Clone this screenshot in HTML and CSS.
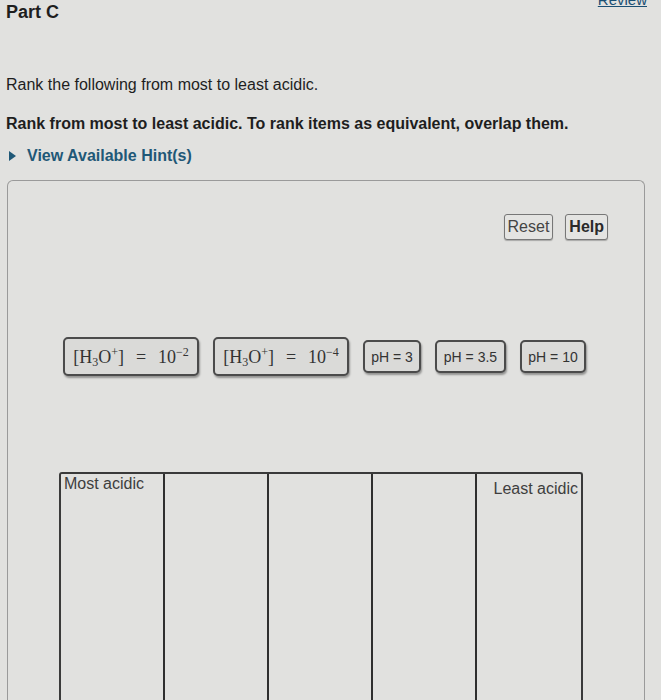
FILE: index.html
```html
<!DOCTYPE html>
<html>
<head>
<meta charset="utf-8">
<link rel="stylesheet" href="styles.css">
</head>
<body>
<div class="page">
  <div class="header">
    <div class="part">Part C</div>
    <a class="review">Review</a>
  </div>
  <p class="prompt">Rank the following from most to least acidic.</p>
  <p class="instr">Rank from most to least acidic. To rank items as equivalent, overlap them.</p>
  <div class="hint"><span class="tri"></span><span>View Available Hint(s)</span></div>
  <div class="panel">
    <div class="tools">
      <button class="btn">Reset</button>
      <button class="btn bold">Help</button>
    </div>
    <div class="items">
      <div class="item math"><span class="expr">[H<sub>3</sub>O<sup>+</sup>]<span class="eq">=</span>10<sup>&minus;2</sup></span></div>
      <div class="item math"><span class="expr">[H<sub>3</sub>O<sup>+</sup>]<span class="eq">=</span>10<sup>&minus;4</sup></span></div>
      <div class="item ph w3">pH = 3</div>
      <div class="item ph w35">pH = 3.5</div>
      <div class="item ph w10">pH = 10</div>
    </div>
    <div class="ranking">
      <div class="col"><span class="lbl">Most acidic</span></div>
      <div class="col"></div>
      <div class="col"></div>
      <div class="col"></div>
      <div class="col last"><span class="lbl right">Least acidic</span></div>
    </div>
  </div>
</div>
</body>
</html>
```

FILE: styles.css
```css
html, body {
  margin: 0;
  padding: 0;
  background: #e1e1df;
  height: 700px;
  overflow: hidden;
}
.page {
  font-family: "Liberation Sans", Arial, sans-serif;
  color: #1e1e1e;
}
.header {
  display: flex;
  justify-content: space-between;
  align-items: flex-start;
  padding: 2px 14px 0 6px;
}
.part {
  font-weight: bold;
  font-size: 18px;
  line-height: 20px;
}
.review {
  margin-top: -10px;
  font-size: 15px;
  color: #1a4f73;
  text-decoration: underline;
  line-height: 16px;
}
.prompt {
  margin: 53px 0 0 6px;
  font-size: 16px;
  line-height: 20px;
}
.instr {
  margin: 19px 0 0 6px;
  font-size: 16px;
  line-height: 20px;
  font-weight: bold;
}
.hint {
  display: flex;
  align-items: center;
  margin: 12px 0 0 9px;
  font-size: 16px;
  line-height: 20px;
  font-weight: bold;
  color: #1f5877;
}
.tri {
  width: 0;
  height: 0;
  border-top: 5px solid transparent;
  border-bottom: 5px solid transparent;
  border-left: 7px solid #1f5877;
  margin-right: 11px;
}
.panel {
  margin: 14px 16px 0 7px;
  border: 1px solid #9a9a9a;
  border-bottom: 0;
  border-radius: 6px 6px 0 0;
  padding: 33px 36px 0 51px;
  height: 520px;
}
.tools {
  display: flex;
  justify-content: flex-end;
  gap: 12px;
}
.btn {
  font-family: "Liberation Sans", Arial, sans-serif;
  font-size: 16px;
  color: #444;
  background: #e4e4e2;
  border: 1px solid #777;
  border-radius: 3px;
  height: 26px;
  padding: 0 3px;
  box-shadow: 0 1px 1px rgba(0,0,0,0.25);
}
.btn.bold {
  font-weight: bold;
  color: #2a2a2a;
}
.items {
  display: flex;
  align-items: center;
  gap: 14px;
  margin-top: 97px;
  padding-left: 4px;
}
.item {
  box-sizing: border-box;
  display: flex;
  align-items: center;
  justify-content: center;
  background: #dadad8;
  border: 2px solid #4b4b4b;
  border-radius: 5px;
  box-shadow: 1px 2px 2px rgba(0,0,0,0.35);
  color: #333;
}
.math {
  font-family: "Liberation Serif", "Times New Roman", serif;
  font-size: 18px;
  width: 136px;
  height: 39px;
  white-space: nowrap;
}
.expr {
  display: inline-block;
  line-height: 20px;
}
.expr sub, .expr sup {
  font-size: 12px;
  line-height: 0;
}
.expr sup {
  vertical-align: 7px;
}
.expr sub {
  vertical-align: -3px;
}
.eq {
  margin: 0 12px;
}
.ph {
  font-size: 14px;
  height: 33px;
}
.w3 { width: 58px; }
.w35 { width: 71px; }
.w10 { width: 66px; }
.ranking {
  display: grid;
  grid-template-columns: repeat(5, 104px);
  margin-top: 96px;
  height: 240px;
  border: 2px solid #3a3a3a;
  border-bottom: 0;
  border-radius: 3px 3px 0 0;
  width: 520px;
}
.col {
  border-right: 2px solid #2f2f2f;
}
.col.last {
  border-right: 0;
}
.lbl {
  display: block;
  font-size: 16px;
  line-height: 20px;
  color: #3e3e3e;
  padding: 0 3px;
}
.lbl.right {
  text-align: right;
  margin-top: 5px;
}
```
